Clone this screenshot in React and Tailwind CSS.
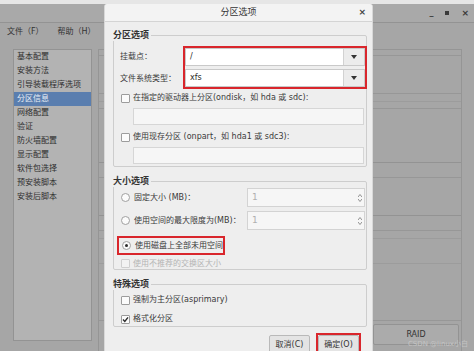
import React from "react";

const FONT = "[font-family:'DejaVu_Sans','Noto_Sans_CJK_SC',sans-serif]";

function Checkbox({ checked = false, disabled = false }) {
  return (
    <span
      className={`flex items-center justify-center w-[9px] h-[9px] shrink-0 rounded-[1px] border ${
        disabled ? "border-[#cfcfcf] bg-[#f2f2f2]" : "border-[#9c9c9c] bg-[#fbfbfb]"
      }`}
    >
      {checked && (
        <svg width="7" height="7" viewBox="0 0 7 7">
          <path d="M1 3.6 L2.8 5.4 L6 1.4" fill="none" stroke="#2b2b2b" strokeWidth="1.4" />
        </svg>
      )}
    </span>
  );
}

function Radio({ checked = false }) {
  return (
    <span className="flex items-center justify-center w-[9px] h-[9px] shrink-0 rounded-full border border-[#a0a0a0] bg-[#fbfbfb]">
      {checked && <span className="w-[3px] h-[3px] rounded-full bg-[#2b2b2b]" />}
    </span>
  );
}

function Combo({ value }) {
  return (
    <div className="flex h-[18px] bg-white border border-[#c9c9c9]">
      <div className="flex-1 flex items-center pl-[4px] text-[8px] text-[#2a2a2a]">{value}</div>
      <div className="w-[21px] flex items-center justify-center bg-[#ececec] border-l border-[#d2d2d2]">
        <svg width="6" height="4" viewBox="0 0 6 4">
          <path d="M0 0 L6 0 L3 4 Z" fill="#333" />
        </svg>
      </div>
    </div>
  );
}

function Spin() {
  return (
    <div className="flex w-[118px] h-[19px] bg-[#f6f6f6] border border-[#d3d3d3]">
      <div className="flex-1 flex items-center pl-[4px] text-[9px] text-[#b0b0b0]">1</div>
      <div className="w-[8px] flex flex-col items-center justify-center gap-[2px]">
        <svg width="4" height="3" viewBox="0 0 4 3">
          <path d="M0 3 L2 0.5 L4 3" fill="none" stroke="#777" strokeWidth="0.8" />
        </svg>
        <svg width="4" height="3" viewBox="0 0 4 3">
          <path d="M0 0 L2 2.5 L4 0" fill="none" stroke="#777" strokeWidth="0.8" />
        </svg>
      </div>
    </div>
  );
}

function Group({ title, children, className = "" }) {
  return (
    <fieldset className={`border border-[#cdcdcd] rounded-[2px] p-0 m-0 min-w-0 ${className}`}>
      <legend className="p-0 pr-[2px] -ml-[1px] text-[9px] leading-[12px] font-bold text-[#333]">{title}</legend>
      {children}
    </fieldset>
  );
}

export default function App() {
  const items = [
    "基本配置",
    "安装方法",
    "引导装载程序选项",
    "分区信息",
    "网络配置",
    "验证",
    "防火墙配置",
    "显示配置",
    "软件包选择",
    "预安装脚本",
    "安装后脚本",
  ];
  return (
    <div className={`relative w-[474px] h-[351px] overflow-hidden bg-[#a6a6a6] ${FONT}`}>
      {/* background window */}
      <div className="h-[4px] bg-[#e6e6e6]" />
      <div className="h-[18px] bg-[#a9a9a9] flex items-center justify-end pr-[5px] gap-[12px] text-[#3a3a3a]">
        <span className="text-[8px] leading-none font-bold">_</span>
        <span className="w-[4px] h-[4px] bg-[#3a3a3a]" />
        <span className="text-[9px] leading-none font-bold">×</span>
      </div>
      <div className="h-px bg-[#939393]" />
      <div className="h-[18px] flex items-center pl-[7px] gap-[14px] text-[8px] text-[#333]">
        <span>文件（F）</span>
        <span>帮助（H）</span>
      </div>
      <div className="flex mt-[8px] pl-[13px] h-[302px]">
        <div className="w-[79px] h-[292px] bg-[#b3b3b3] border border-[#939393] flex flex-col">
          {items.map((t, i) => (
            <div
              key={t}
              className={`h-[14px] shrink-0 flex items-center pl-[3px] text-[8px] whitespace-nowrap ${
                i === 3 ? "bg-[#5a7eaf] text-[#e8eef6]" : "text-[#2e2e2e]"
              }`}
            >
              {t}
            </div>
          ))}
        </div>
        <div className="ml-[6px] w-[364px] border-l border-t border-r border-[#959595] flex flex-col">
          <div className="h-[6px] border-b border-[#979797]" />
          <div className="h-[38px] border-b border-[#979797]" />
          <div className="h-[8px] border-b border-[#9c9c9c]" />
          <div className="h-[7px] border-b border-[#979797]" />
          <div className="h-[54px] border-b border-[#939393]" />
          <div className="h-[15px] border-b border-[#979797]" />
          <div className="h-[38px] border-b border-[#939393]" />
          <div className="h-[15px] border-b border-[#979797]" />
          <div className="h-[8px] border-b border-[#9c9c9c]" />
          <div className="h-[25px] border-b border-[#9c9c9c]" />
          <div className="h-[57px] border-b border-[#979797]" />
          <div className="flex justify-end pr-[2px] pt-[3px]">
            <div className="w-[86px] h-[21px] bg-[#ababab] border border-[#939393] rounded-[2px] flex items-center justify-center text-[8px] text-[#333]">
              RAID
            </div>
          </div>
        </div>
      </div>
      <div className="absolute right-[6px] bottom-[2px] text-[7px] text-[#c4c4c4]">CSDN @linux小白</div>

      {/* dialog */}
      <div className="absolute left-[104px] top-[4px] w-[269px] h-[360px] bg-[#eeeeee] rounded-t-[3px] border-l border-r border-[#d8d8d8] flex flex-col text-[#3a3a3a]">
        <div className="h-[18px] shrink-0 grid grid-cols-[1fr_auto_1fr] items-center bg-[#f3f3f3] border-b border-[#d4d4d4] rounded-t-[3px]">
          <span />
          <span className="text-[9px] text-[#333]">分区选项</span>
          <span className="justify-self-end pr-[6px] text-[9px] font-bold text-[#444]">×</span>
        </div>
        <div className="pl-[8px] pr-[5px] pt-[7px] flex flex-col">
          <Group title="分区选项">
            <div className="flex mt-[5px] pl-[6px]">
              <div className="w-[63px] flex flex-col text-[8px] whitespace-nowrap">
                <div className="h-[20px] flex items-center mt-[1px]">挂载点：</div>
                <div className="h-[21px] flex items-center mt-[1px]">文件系统类型：</div>
              </div>
              <div className="flex-1 -mr-[1px] border-2 border-[#d9262c] flex flex-col gap-[3px]">
                <Combo value="/" />
                <Combo value="xfs" />
              </div>
            </div>
            <div className="flex items-center gap-[3px] h-[12px] mt-[3px] pl-[7px] text-[8px] whitespace-nowrap">
              <Checkbox />
              <span>在指定的驱动器上分区(ondisk，如 hda 或 sdc):</span>
            </div>
            <div className="mt-[4px] ml-[19px] mr-[2px] h-[17px] bg-[#f6f6f6] border border-[#d6d6d6]" />
            <div className="flex items-center gap-[3px] h-[12px] mt-[6px] pl-[7px] text-[8px] whitespace-nowrap">
              <Checkbox />
              <span>使用现存分区 (onpart，如 hda1 或 sdc3):</span>
            </div>
            <div className="mt-[4px] mb-[2px] ml-[19px] mr-[2px] h-[17px] bg-[#f6f6f6] border border-[#d6d6d6]" />
          </Group>

          <Group title="大小选项" className="mt-[8px]">
            <div className="flex items-center justify-between mt-[1px] pl-[7px] pr-[1px] h-[19px]">
              <div className="flex items-center gap-[4px] text-[8px] whitespace-nowrap">
                <Radio />
                <span>固定大小 (MB)：</span>
              </div>
              <Spin />
            </div>
            <div className="flex items-center justify-between mt-[4px] pl-[7px] pr-[1px] h-[19px]">
              <div className="flex items-center gap-[4px] text-[8px] whitespace-nowrap">
                <Radio />
                <span>使用空间的最大限度为(MB)：</span>
              </div>
              <Spin />
            </div>
            <div className="flex mt-[6px] ml-[3px]">
              <div className="h-[19px] w-[108px] border-2 border-[#d9262c] flex items-center gap-[4px] pl-[3px] text-[8px] whitespace-nowrap">
                <Radio checked />
                <span>使用磁盘上全部未用空间</span>
              </div>
            </div>
            <div className="flex items-center gap-[3px] h-[11px] mt-[3px] pl-[7px] text-[8px] text-[#b4b4b4] whitespace-nowrap">
              <Checkbox disabled />
              <span>使用不推荐的交换区大小</span>
            </div>
          </Group>

          <Group title="特殊选项" className="mt-[8px]">
            <div className="flex items-center gap-[3px] h-[12px] mt-[4px] pl-[7px] text-[8px] whitespace-nowrap">
              <Checkbox />
              <span>强制为主分区(asprimary)</span>
            </div>
            <div className="flex items-center gap-[3px] h-[12px] mt-[7px] mb-[1px] pl-[7px] text-[8px] whitespace-nowrap">
              <Checkbox checked />
              <span>格式化分区</span>
            </div>
          </Group>

          <div className="flex justify-end items-start gap-[6px] mt-[6px] mr-[6px]">
            <div className="mt-[2px] w-[41px] h-[22px] bg-[#e4e4e4] border border-[#b9b9b9] rounded-[2px] flex items-start justify-center pt-[3px] text-[8px] text-[#333] whitespace-nowrap">
              取消(C)
            </div>
            <div className="border-2 border-[#d9262c] p-0">
              <div className="w-[41px] h-[22px] bg-[#e4e4e4] border border-[#b9b9b9] rounded-[2px] flex items-start justify-center pt-[3px] text-[8px] text-[#333] whitespace-nowrap">
                确定(O)
              </div>
            </div>
          </div>
        </div>
      </div>
    </div>
  );
}
